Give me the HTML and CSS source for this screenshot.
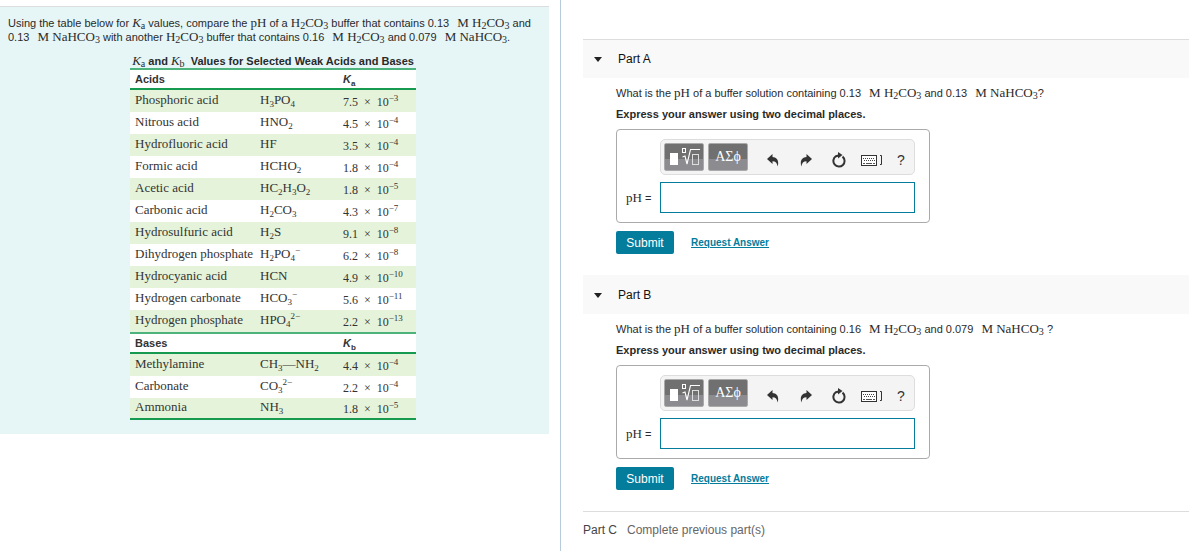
FILE: index.html
```
<!DOCTYPE html>
<html lang="en">
<head>
<meta charset="utf-8">
<title>Buffer pH</title>
<link rel="stylesheet" href="styles.css">
</head>
<body>
<svg class="sprite" aria-hidden="true">
  <symbol id="i-root" viewBox="0 0 32 20">
    <rect x="2" y="6" width="8" height="12" fill="#fff"/>
    <rect x="14.500" y="1.500" width="3" height="4" fill="none" stroke="#fff"/>
    <path d="M14.500 10l2.500-1 2 8 3.500-14.500H32" fill="none" stroke="#fff" stroke-width="1.100"/>
    <rect x="24.500" y="7.500" width="6" height="10" fill="none" stroke="#ddd"/>
  </symbol>
  <symbol id="i-undo" viewBox="0 0 12 13">
    <path d="M0 5L5.500 0v3C10 3.200 12.500 7 10.500 12.500 10.300 9 8.500 7.300 5.500 7.300V10z" fill="#333"/>
  </symbol>
  <symbol id="i-redo" viewBox="0 0 12 13">
    <path d="M12 5L6.500 0v3C2 3.200-.5 7 1.500 12.500 1.700 9 3.500 7.300 6.500 7.300V10z" fill="#333"/>
  </symbol>
  <symbol id="i-reset" viewBox="0 0 14 16">
    <path d="M10.500 4.600A5.600 5.600 0 1 1 4 4.200L7.500 3.300" fill="none" stroke="#333" stroke-width="2"/>
    <path d="M6 0l4.500 3L6 6.500z" fill="#333"/>
  </symbol>
  <symbol id="i-keys" viewBox="0 0 22 11">
    <rect x=".5" y=".5" width="15" height="10" fill="#fff" stroke="#333"/>
    <path d="M2 3.500h12M3 5.500h11" stroke="#444" stroke-dasharray="1 1"/>
    <path d="M2 8.500h2M5 8.500h6M12 8.500h2" stroke="#555"/>
    <path d="M19 .5h1.500v9H19" fill="none" stroke="#333"/>
  </symbol>
</svg>
<div class="page">
  <section class="intro">
    <div class="panel">
      <p class="problem">Using the table below for <span class="m"><i>K</i><sub>a</sub></span> values, compare the <span class="m">pH</span> of a <span class="m">H<sub>2</sub>CO<sub>3</sub></span> buffer that contains 0.13 <span class="m unit">M H<sub>2</sub>CO<sub>3</sub></span> and<br>0.13 <span class="m unit">M NaHCO<sub>3</sub></span> with another <span class="m">H<sub>2</sub>CO<sub>3</sub></span> buffer that contains 0.16 <span class="m unit">M H<sub>2</sub>CO<sub>3</sub></span> and 0.079 <span class="m unit">M NaHCO<sub>3</sub></span>.</p>
      <table class="acids">
        <caption><span class="m"><i>K</i><sub>a</sub></span> and <span class="m"><i>K</i><sub>b</sub></span>&nbsp; Values for Selected Weak Acids and Bases</caption>
        <colgroup><col class="c-name"><col class="c-formula"><col class="c-value"></colgroup>
        <tbody>
          <tr class="head"><th scope="col" colspan="2">Acids</th><th scope="col"><i>K</i><sub>a</sub></th></tr>
          <tr><td>Phosphoric acid</td><td>H<sub>3</sub>PO<sub>4</sub></td><td>7.5&nbsp; ×&nbsp; 10<sup>−3</sup></td></tr>
          <tr><td>Nitrous acid</td><td>HNO<sub>2</sub></td><td>4.5&nbsp; ×&nbsp; 10<sup>−4</sup></td></tr>
          <tr><td>Hydrofluoric acid</td><td>HF</td><td>3.5&nbsp; ×&nbsp; 10<sup>−4</sup></td></tr>
          <tr><td>Formic acid</td><td>HCHO<sub>2</sub></td><td>1.8&nbsp; ×&nbsp; 10<sup>−4</sup></td></tr>
          <tr><td>Acetic acid</td><td>HC<sub>2</sub>H<sub>3</sub>O<sub>2</sub></td><td>1.8&nbsp; ×&nbsp; 10<sup>−5</sup></td></tr>
          <tr><td>Carbonic acid</td><td>H<sub>2</sub>CO<sub>3</sub></td><td>4.3&nbsp; ×&nbsp; 10<sup>−7</sup></td></tr>
          <tr><td>Hydrosulfuric acid</td><td>H<sub>2</sub>S</td><td>9.1&nbsp; ×&nbsp; 10<sup>−8</sup></td></tr>
          <tr><td>Dihydrogen phosphate</td><td>H<sub>2</sub>PO<sub>4</sub><sup>−</sup></td><td>6.2&nbsp; ×&nbsp; 10<sup>−8</sup></td></tr>
          <tr><td>Hydrocyanic acid</td><td>HCN</td><td>4.9&nbsp; ×&nbsp; 10<sup>−10</sup></td></tr>
          <tr><td>Hydrogen carbonate</td><td>HCO<sub>3</sub><sup>−</sup></td><td>5.6&nbsp; ×&nbsp; 10<sup>−11</sup></td></tr>
          <tr><td>Hydrogen phosphate</td><td>HPO<sub>4</sub><sup>2−</sup></td><td>2.2&nbsp; ×&nbsp; 10<sup>−13</sup></td></tr>
        </tbody>
        <tbody>
          <tr class="head"><th scope="col" colspan="2">Bases</th><th scope="col"><i>K</i><sub>b</sub></th></tr>
          <tr><td>Methylamine</td><td>CH<sub>3</sub>—NH<sub>2</sub></td><td>4.4&nbsp; ×&nbsp; 10<sup>−4</sup></td></tr>
          <tr><td>Carbonate</td><td>CO<sub>3</sub><sup>2−</sup></td><td>2.2&nbsp; ×&nbsp; 10<sup>−4</sup></td></tr>
          <tr><td>Ammonia</td><td>NH<sub>3</sub></td><td>1.8&nbsp; ×&nbsp; 10<sup>−5</sup></td></tr>
        </tbody>
      </table>
    </div>
  </section>
  <main class="parts">
    <section class="part first">
      <h2><button type="button" class="toggle"><span class="caret"></span>Part A</button></h2>
      <form class="body">
        <p>What is the <span class="m">pH</span> of a buffer solution containing 0.13 <span class="m unit">M H<sub>2</sub>CO<sub>3</sub></span> and 0.13 <span class="m unit">M NaHCO<sub>3</sub></span>?</p>
        <p class="express">Express your answer using two decimal places.</p>
        <div class="answer">
          <div class="tools">
            <button type="button" class="pad" aria-label="Templates"><svg width="32" height="20"><use href="#i-root"/></svg></button>
            <button type="button" class="pad">ΑΣϕ</button>
            <div class="actions">
              <button type="button" aria-label="Undo"><svg width="12" height="13"><use href="#i-undo"/></svg></button>
              <button type="button" aria-label="Redo"><svg width="12" height="13"><use href="#i-redo"/></svg></button>
              <button type="button" aria-label="Reset"><svg width="14" height="16"><use href="#i-reset"/></svg></button>
              <button type="button" aria-label="Keyboard shortcuts"><svg width="22" height="11"><use href="#i-keys"/></svg></button>
              <button type="button" class="help">?</button>
            </div>
          </div>
          <label for="ph-a"><span class="m">pH</span> =</label>
          <input id="ph-a" type="text">
        </div>
        <div class="submit"><button type="button" class="primary">Submit</button><a href="#">Request Answer</a></div>
      </form>
    </section>
    <section class="part">
      <h2><button type="button" class="toggle"><span class="caret"></span>Part B</button></h2>
      <form class="body">
        <p>What is the <span class="m">pH</span> of a buffer solution containing 0.16 <span class="m unit">M H<sub>2</sub>CO<sub>3</sub></span> and 0.079 <span class="m unit">M NaHCO<sub>3</sub></span> ?</p>
        <p class="express">Express your answer using two decimal places.</p>
        <div class="answer">
          <div class="tools">
            <button type="button" class="pad" aria-label="Templates"><svg width="32" height="20"><use href="#i-root"/></svg></button>
            <button type="button" class="pad">ΑΣϕ</button>
            <div class="actions">
              <button type="button" aria-label="Undo"><svg width="12" height="13"><use href="#i-undo"/></svg></button>
              <button type="button" aria-label="Redo"><svg width="12" height="13"><use href="#i-redo"/></svg></button>
              <button type="button" aria-label="Reset"><svg width="14" height="16"><use href="#i-reset"/></svg></button>
              <button type="button" aria-label="Keyboard shortcuts"><svg width="22" height="11"><use href="#i-keys"/></svg></button>
              <button type="button" class="help">?</button>
            </div>
          </div>
          <label for="ph-b"><span class="m">pH</span> =</label>
          <input id="ph-b" type="text">
        </div>
        <div class="submit"><button type="button" class="primary">Submit</button><a href="#">Request Answer</a></div>
      </form>
    </section>
    <section class="locked"><h2>Part C</h2><p>Complete previous part(s)</p></section>
  </main>
</div>
</body>
</html>
```
FILE: styles.css
```
* { box-sizing: border-box; }
body {
  margin: 0;
  background: #fff;
  color: #2a2a2a;
  font: 11px/14px "Liberation Sans", Arial, sans-serif;
}
p, h2 { margin: 0; }
button { font: inherit; border: 0; padding: 0; background: none; color: inherit; }
.sprite { display: none; }
sub, sup { font-size: 9px; line-height: 0; }
sub { vertical-align: -3px; }
sup { vertical-align: 5px; }
.m { font-family: "Liberation Serif", serif; font-size: 13px; font-weight: 400; line-height: 0; }
.m sub { font-size: 10px; vertical-align: -2px; }
.unit { margin-left: 5px; }

.page { display: grid; grid-template-columns: 47.1% 1fr; min-height: 100vh; }
.intro { padding: 6px 11px 0 0; }
.panel { background: #e6f6f7; border-top: 1px solid #ddd; padding: 9px 11px 14px 8px; }
.problem { white-space: nowrap; }

.acids {
  width: 286px;
  margin: 10px auto 0;
  border-collapse: separate;
  border-spacing: 0;
  table-layout: fixed;
  background: #fff;
  font: 13px/20px "Liberation Serif", serif;
  color: #333;
}
.acids caption {
  font: bold 11px/14px "Liberation Sans", Arial, sans-serif;
  color: #2a2a2a;
  white-space: nowrap;
}
.c-name { width: 130px; }
.c-formula { width: 78px; }
.acids td { height: 22px; padding: 0 0 2px; white-space: nowrap; }
.acids td:first-child { padding-left: 5px; }
.acids td:last-child { padding: 2px 0 0 5px; font-size: 12px; }
.acids th {
  padding: 0 0 0 5px;
  border-top: 2px solid #4db27c;
  border-bottom: 2px solid #169a50;
  text-align: left;
  font: bold 11px/18px "Liberation Sans", Arial, sans-serif;
}
.acids th sub { font-size: 8px; }
.acids tr:nth-child(even) td { background: #e5f3da; }
.acids tbody:last-child tr:last-child td { border-bottom: 2px solid #169a50; line-height: 18px; }

.parts { border-left: 1px solid #b8cbdc; padding: 39px 0 0 22px; }
.part h2 { background: #f9f9f9; border-top: 1px solid #f9f9f9; font-weight: 400; }
.part.first h2 { border-top-color: #ddd; }
.toggle { display: flex; align-items: center; gap: 16px; height: 38px; padding-left: 11px; font-size: 12px; color: #111; }
.caret { border: 4px solid transparent; border-top: 5px solid #222; border-bottom: 0; }
.body { padding: 5px 0 21px 33px; }
.body p { line-height: 21px; }
.body .express { font-weight: bold; }
.answer {
  display: grid;
  grid-template-columns: 34px 255px;
  width: max-content;
  margin-top: 4px;
  padding: 9px 14px 9px 9px;
  border: 1px solid #aaa;
  border-radius: 4px;
  row-gap: 7px;
  align-items: center;
}
.tools {
  grid-column: 2;
  display: flex;
  gap: 4px;
  height: 36px;
  padding: 3px 0 3px 3px;
  border: 1px solid #ddd;
  border-radius: 5px;
  background: #f4f4f4;
}
.pad {
  display: flex;
  align-items: center;
  justify-content: center;
  width: 40px;
  height: 28px;
  border: 1px solid #aaa;
  border-radius: 2px;
  background: linear-gradient(#707070 58%, #8b8b90 58%);
  color: #fff;
  font: 14px/24px "Liberation Serif", serif;
}
.actions {
  flex: 1;
  display: grid;
  grid-template-columns: repeat(4, 33px) 26px;
  align-items: center;
  justify-items: center;
  padding: 6px 0 0 4px;
}
.actions svg { display: block; }
.help { font-size: 14px; color: #333; }
.answer label { white-space: nowrap; }
.answer input { width: 100%; height: 31px; border: 1px solid #047c9c; padding: 0 6px; font: inherit; background: #fff; }
.submit { display: flex; align-items: center; gap: 17px; margin-top: 8px; }
.primary { width: 58px; height: 23px; border-radius: 2px; background: #047c9c; color: #fff; font-size: 12px; }
.submit a { color: #047c9c; font-size: 10px; font-weight: bold; }
.locked { display: flex; gap: 10px; padding: 11px 0 7px; border-top: 1px solid #ddd; color: #666; font-size: 12px; }
.locked h2 { font-size: 12px; font-weight: 400; color: #444; }
```
